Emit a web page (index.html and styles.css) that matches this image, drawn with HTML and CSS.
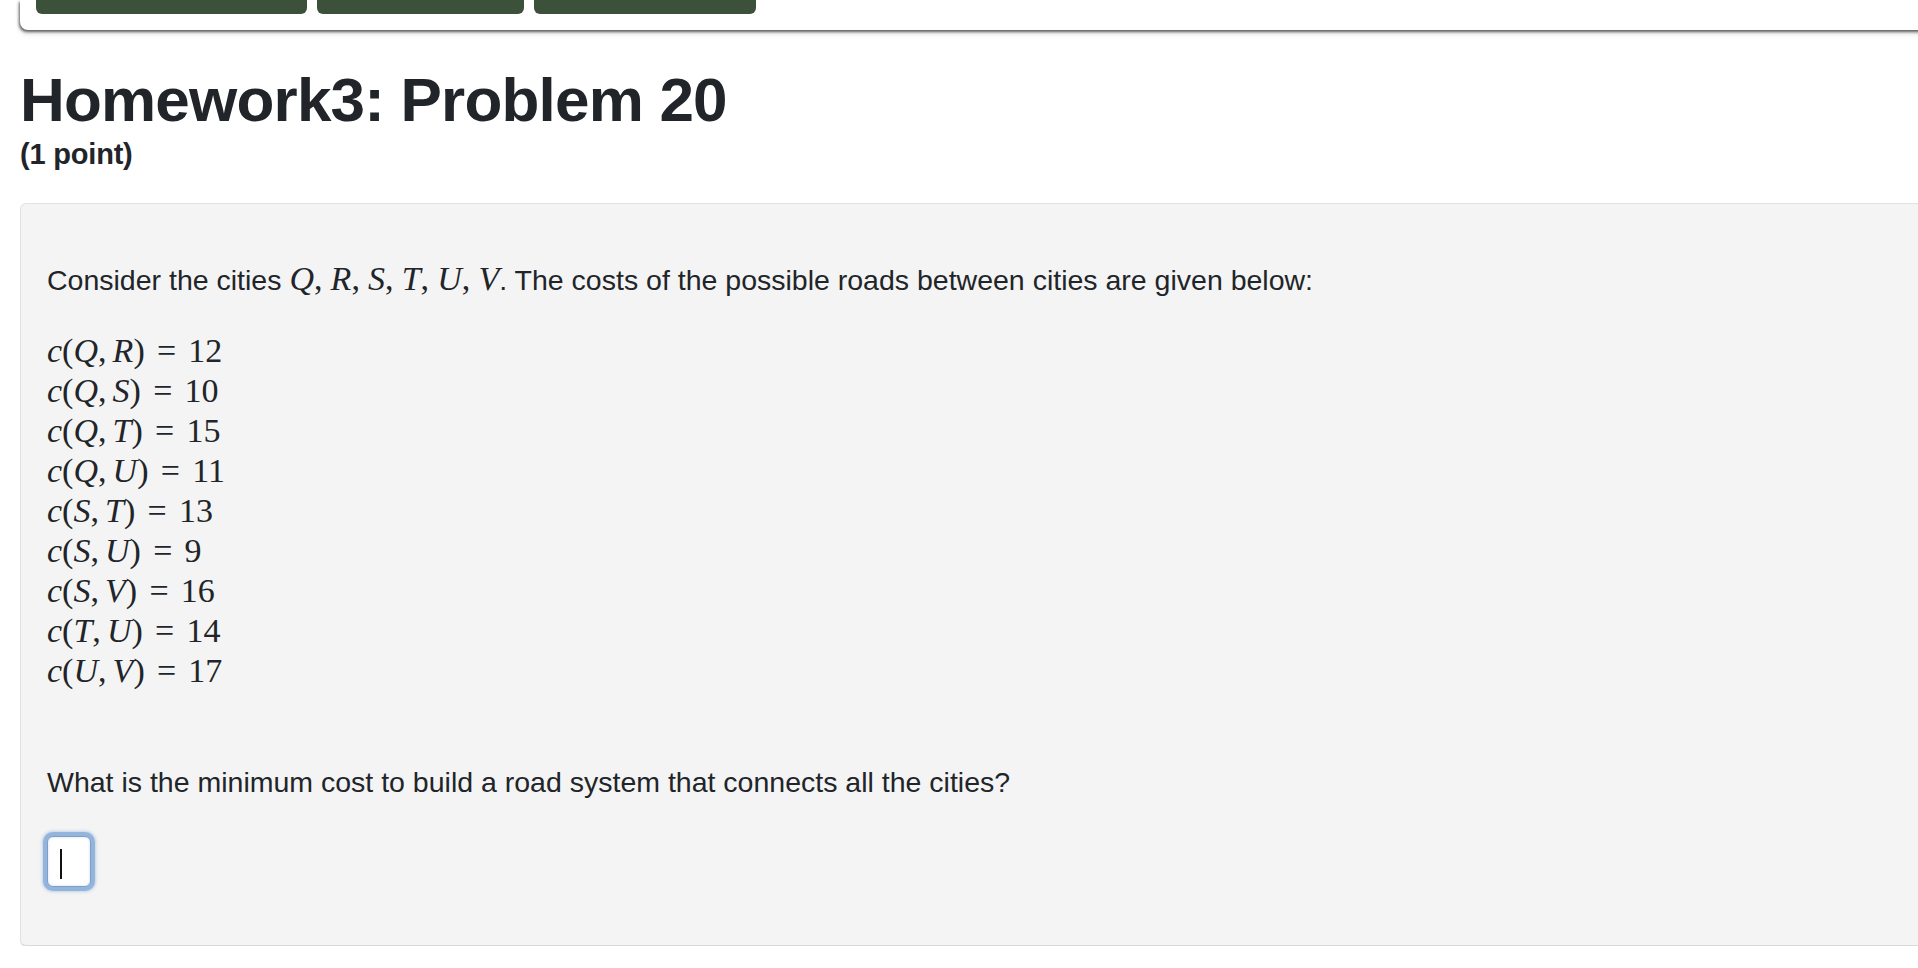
FILE: index.html
```html
<!doctype html>
<html lang="en">
<head>
<meta charset="UTF-8">
<meta name="viewport" content="width=device-width,initial-scale=1">
<title>Homework3: Problem 20</title>
<link rel="stylesheet" href="styles.css">
</head>
<body>

<!-- ========================  TOP BAR  ======================== -->
<div class="topbar">
  <a href="#" class="nav-btn btn-1"></a>
  <a href="#" class="nav-btn btn-2"></a>
  <a href="#" class="nav-btn btn-3"></a>
</div>

<!-- ========================  PROBLEM  ======================== -->
<main class="content">
  <h1 class="problem-title">Homework3: Problem 20</h1>
  <div class="points">(1 point)</div>

  <div class="problem">
    <p class="lead">Consider the cities <span class="math"><i>Q</i>,<span class="th"></span><i>R</i>,<span class="th"></span><i>S</i>,<span class="th"></span><i>T</i>,<span class="th"></span><i>U</i>,<span class="th"></span><i>V</i></span>. The costs of the possible roads between cities are given below:</p>

    <div class="costs">
      <div class="cost"><span class="math"><i>c</i>(<i>Q</i>,<span class="th"></span><i>R</i>)<span class="eq">=</span>12</span></div>
      <div class="cost"><span class="math"><i>c</i>(<i>Q</i>,<span class="th"></span><i>S</i>)<span class="eq">=</span>10</span></div>
      <div class="cost"><span class="math"><i>c</i>(<i>Q</i>,<span class="th"></span><i>T</i>)<span class="eq">=</span>15</span></div>
      <div class="cost"><span class="math"><i>c</i>(<i>Q</i>,<span class="th"></span><i>U</i>)<span class="eq">=</span>11</span></div>
      <div class="cost"><span class="math"><i>c</i>(<i>S</i>,<span class="th"></span><i>T</i>)<span class="eq">=</span>13</span></div>
      <div class="cost"><span class="math"><i>c</i>(<i>S</i>,<span class="th"></span><i>U</i>)<span class="eq">=</span>9</span></div>
      <div class="cost"><span class="math"><i>c</i>(<i>S</i>,<span class="th"></span><i>V</i>)<span class="eq">=</span>16</span></div>
      <div class="cost"><span class="math"><i>c</i>(<i>T</i>,<span class="th"></span><i>U</i>)<span class="eq">=</span>14</span></div>
      <div class="cost"><span class="math"><i>c</i>(<i>U</i>,<span class="th"></span><i>V</i>)<span class="eq">=</span>17</span></div>
    </div>

    <p class="question">What is the minimum cost to build a road system that connects all the cities?</p>

    <span class="answer"><input type="text" class="answer-input" aria-label="Answer"></span>
  </div>
</main>

</body>
</html>
```

FILE: styles.css
```css
/* ---- Base ---------------------------------------------------------- */
html,body{margin:0;padding:0}
body{
  font-family:"Liberation Sans",Arial,Helvetica,sans-serif;
  color:#212529;background:#fff;
  overflow:hidden}

/* ---- Top bar ------------------------------------------------------- */
.topbar{
  margin-left:20px;margin-right:-20px;
  height:30px;box-sizing:border-box;
  display:flex;gap:10px;padding-left:16px;
  background:#fff;
  border-radius:0 0 0 8px;
  box-shadow:-1px 2px 3px rgba(0,0,0,.6),0 4px 6px rgba(0,0,0,.1)}
.nav-btn{display:block;height:14px;background:#3b5139;border-radius:0 0 6px 6px}
.btn-1{width:271px}
.btn-2{width:207px}
.btn-3{width:222px}

/* ---- Heading ------------------------------------------------------- */
.content{padding-left:20px}
.problem-title{
  margin:33px 0 0;
  font-size:62px;line-height:1.2;font-weight:bold;letter-spacing:-.8px}
.points{margin-top:0;font-size:29px;line-height:1.2;font-weight:bold;letter-spacing:-.2px}

/* ---- Problem box --------------------------------------------------- */
.problem{
  margin:31px -40px 0 0;
  padding:55px 26px 58px;
  background:#f4f4f4;
  border:1px solid #e2e2e2;border-bottom-color:#d9d9d9;
  border-radius:6px 0 0 6px;
  box-shadow:0 1px 0 #e8e8e8;
  font-size:28.5px;line-height:1.5}
.problem p{margin:0}

/* ---- Math ---------------------------------------------------------- */
.math{font-family:"Liberation Serif","Times New Roman",serif;font-size:34px;line-height:1;white-space:nowrap}
.math i{font-style:italic}
.th{display:inline-block;width:.24em}
.cost .th{width:.18em}
.eq{margin:0 .36em}
.costs{margin-top:29px}
.cost{height:40px;line-height:40px}
.cost .math{line-height:40px;vertical-align:top}

.problem .question{margin-top:70px}

/* ---- Answer input -------------------------------------------------- */
.answer{position:relative;display:block;margin-top:32px;width:44px}
.answer-input{
  display:block;box-sizing:border-box;
  width:44px;height:51px;margin:0;padding:0;
  background:#fff;border:1.5px solid #7d9ec8;border-radius:6px;
  box-shadow:0 0 0 4px #93b4db,0 0 3px 5px rgba(147,180,219,.55),inset 0 0 3px rgba(120,160,210,.35);
  outline:none;font:inherit}
.answer::after{
  content:"";position:absolute;left:13px;top:13px;
  width:2px;height:30px;background:#111}
```
